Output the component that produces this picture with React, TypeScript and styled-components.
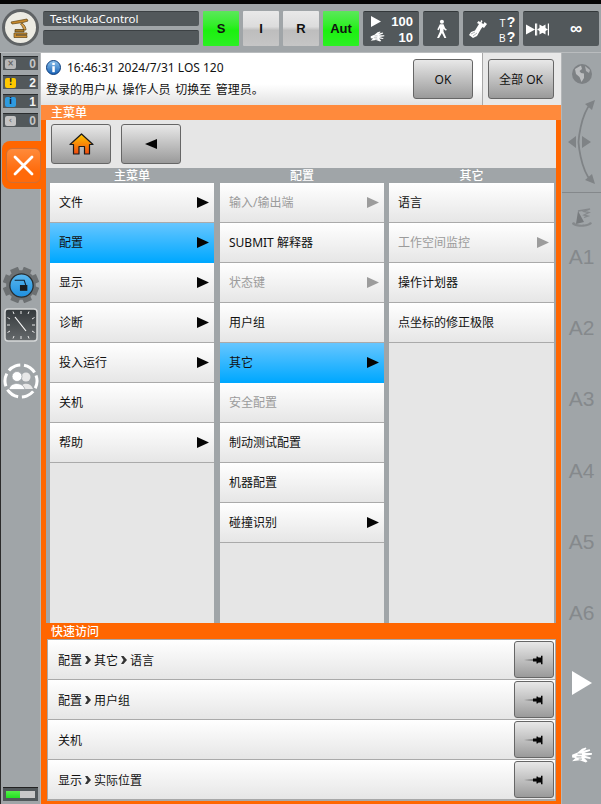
import React from "react";
import styled, { createGlobalStyle } from "styled-components";

const Global = createGlobalStyle`
  html, body { margin: 0; padding: 0; background: #a0a5a8; }
  * { box-sizing: border-box; }
  body { font-family: "Noto Sans", "Noto Sans CJK SC", sans-serif; font-size: 12px; color: #111; }
`;
const Page = styled.div`width: 601px; height: 804px; overflow: hidden; display: flex; flex-direction: column; background: #a0a5a8;`;
const BlackStrip = styled.div`height: 4px; background: #050505;`;
const TopBar = styled.div`height: 49px; display: flex; align-items: flex-start; padding: 7px 0 0 2px; background: #a0a5a8; border-bottom: 1px solid #b9bcbe;`;
const LogoDisc = styled.div`width: 37px; height: 37px; margin-top: -2px; border-radius: 50%; border: 3px solid #5f6365; background: #ecebe3; display: flex; align-items: center; justify-content: center;`;
const Names = styled.div`width: 156px; margin-left: 4px; display: flex; flex-direction: column; gap: 4px;`;
const NameField = styled.div`height: 15px; background: #52585b; border-radius: 2px; color: #fff; font-size: 11.500px; line-height: 14px; padding-left: 7px; border-top: 1px solid #3c4144;`;
const ModeRow = styled.div`display: flex; gap: 4px; margin-left: 4px;`;
const ModeKey = styled.div<{ $on?: boolean }>`
  width: 36px; height: 35px; display: flex; align-items: center; justify-content: center; font-weight: 700; font-size: 13px; font-family: "Liberation Sans", sans-serif; color: #111; border-radius: 1px;
  background: ${(p) => p.$on ? "linear-gradient(#5be85a 0%, #33ee2a 40%, #1cf010 55%, #2cf024 100%)" : "linear-gradient(#e9e9e9, #dcdcdc 45%, #bdbdbd 55%, #c6c6c6)"};
`;
const StatusTile = styled.div<{ $w: number }>`
  width: ${(p) => p.$w}px; height: 35px; background: #52585b; border-top: 1px solid #33383a; border-radius: 2px; color: #fff; font-weight: 700; display: flex; align-items: center; font-family: "Liberation Sans", sans-serif;
`;
const TileRows = styled(StatusTile)`flex-direction: column; align-items: stretch; justify-content: center; padding: 0 6px 0 7px; gap: 1px;`;
const TileRow = styled.div`display: flex; justify-content: space-between; align-items: center; height: 15px; font-size: 13px;`;
const TileCenter = styled(StatusTile)`justify-content: center;`;
const TileProbe = styled(StatusTile)`padding-left: 5px;`;
const TileWide = styled(StatusTile)`padding: 0 0 0 3px; gap: 21px; font-size: 17px;`;
const SmallT = styled.span`font-size: 10px; font-weight: 400;`;
const QMark = styled.span`font-size: 14px;`;
const Tq = styled.div`display: flex; align-items: baseline; gap: 1px; justify-content: flex-end; height: 15px;`;
const TqCol = styled.div`display: flex; flex-direction: column; margin-left: 11px;`;
const Body = styled.div`flex: 1; display: flex; min-height: 0;`;

const LeftRail = styled.div`width: 41px; border-left: 1px solid #2b2b2b; border-right: 1px solid #b4b7b9; display: flex; flex-direction: column; background: #a0a5a8;`;
const Counters = styled.div`display: flex; flex-direction: column; gap: 5px; padding: 3px 0 0 2px;`;
const Counter = styled.div<{ $dim?: boolean }>`width: 35px; height: 14px; background: #52585b; border-top: 1px solid #2a2d2f; display: flex; align-items: center; justify-content: space-between; padding: 0 2px 0 2px; color: ${(p) => (p.$dim ? "#c4c6c7" : "#f2f2f2")}; font-size: 12px; font-weight: 700; font-family: "Liberation Sans", sans-serif;`;
const Lamp = styled.div<{ $bg: string; $fg: string }>`width: 11px; height: 10px; border-radius: 2px; background: ${(p) => p.$bg}; color: ${(p) => p.$fg}; font-size: 8px; line-height: 10px; text-align: center; font-weight: 700; font-family: "DejaVu Sans", sans-serif;`;
const CloseTab = styled.div`width: 39px; height: 48px; margin: 14px -1px 0 1px; background: #ff6600; border-radius: 8px 0 0 8px; padding: 7px 1px 0 4px;`;
const CloseKey = styled.div`width: 35px; height: 35px; border-radius: 6px; background: linear-gradient(#ff8a3a, #ff6a0a 70%); border: 1px solid #cf6f35; display: flex; align-items: center; justify-content: center;`;
const RailIcon = styled.div<{ $top: number }>`margin-top: ${(p) => p.$top}px; display: flex; justify-content: center;`;
const Battery = styled.div`margin: auto 0 3px 2px; width: 35px; height: 14px; background: #52585b; border-top: 1px solid #222; padding: 3px; display: flex;`;
const BatteryFill = styled.div`width: 14px; background: linear-gradient(#55f04a, #22e020);`;
const BatteryRest = styled.div`flex: 1; background: #c8c8c8;`;

const Center = styled.div`width: 520px; display: flex; flex-direction: column; background: #ff6600;`;
const MessageBar = styled.div`height: 52px; display: flex; background: linear-gradient(#fff 60%, #e2e2e2);`;
const MessageMain = styled.div`flex: 1; display: flex; justify-content: space-between; padding: 6px 9px 0 5px;`;
const MessageText = styled.div`display: flex; flex-direction: column;`;
const MsgHead = styled.div`display: flex; align-items: center; gap: 6px; height: 16px; font-size: 12px;`;
const MsgBody = styled.div`margin-top: 6px; font-size: 12px; line-height: 17px; white-space: pre; word-spacing: 1.500px;`;
const MessageAll = styled.div`width: 79px; border-left: 1px solid #a8a8a8; background: #e8e8e8; padding: 6px 0 0 5px;`;
const GreyButton = styled.div<{ $w: number; $h?: number }>`
  width: ${(p) => p.$w}px; height: ${(p) => p.$h ?? 40}px; border: 1px solid #666; border-radius: 3px;
  background: linear-gradient(#e8e8e8, #9a9a9a); display: flex; align-items: center; justify-content: center; font-size: 12px; color: #111; flex: none;
`;
const PanelTitle = styled.div`height: 15px; background: #ff8a3c; color: #fff; font-weight: 500; font-size: 12px; line-height: 16px; padding-left: 10px;`;
const PanelInner = styled.div`flex: 1; display: flex; flex-direction: column; padding: 0 5px;`;
const ToolRow = styled.div`height: 48px; background: #e6e6e6; display: flex; gap: 10px; padding: 4px 5px;`;
const ColumnsArea = styled.div`height: 455px; background: #a0a5a8; display: flex; padding: 0 2px 0 4px;`;
const Column = styled.div<{ $w: number; $gap: number }>`width: ${(p) => p.$w}px; margin-right: ${(p) => p.$gap}px; display: flex; flex-direction: column;`;
const ColumnTitle = styled.div`height: 15px; text-align: center; color: #fff; font-weight: 500; font-size: 12px; line-height: 15px;`;
const ColumnBody = styled.div`flex: 1; background: #e6e6e6;`;
const MenuRow = styled.div<{ $active?: boolean; $off?: boolean }>`
  height: 40px; padding: 0 5px 1px 9px; display: flex; align-items: center; justify-content: space-between; font-size: 12px;
  color: ${(p) => (p.$off ? "#9b9b9b" : "#111")};
  background: ${(p) => (p.$active ? "linear-gradient(#66c6ff, #00a8ff)" : "linear-gradient(#fff, #e6e6e6)")};
  border-bottom: 1px solid ${(p) => (p.$active ? "#00a8ff" : "#aaa")};
`;
const QuickTitle = styled.div`height: 16px; margin-left: -5px; padding-left: 10px; color: #fff; font-weight: 500; font-size: 12px; line-height: 17px;`;
const QuickList = styled.div`margin-left: 1px; border: 1px solid #a8a8a8; border-bottom-width: 2px; width: 509px;`;
const QuickRow = styled.div`height: 40px; display: flex; align-items: center; justify-content: space-between; padding: 0 1px 0 10px; background: linear-gradient(#fff, #e6e6e6); border-bottom: 1px solid #aaa; font-size: 12px; &:last-child { border-bottom: 0; height: 39px; }`;
const Crumbs = styled.div`display: flex; align-items: center; gap: 3px;`;

const RightRail = styled.div`width: 40px; display: flex; flex-direction: column; align-items: center; background: #a0a5a8; border-left: 1px solid #b4b7b9;`;
const AxisGroup = styled.div`width: 100%; height: 140px; border-bottom: 1px solid #84888b; display: flex; flex-direction: column; align-items: center; padding-top: 11px; gap: 16px;`;
const AxisLabel = styled.div`font-size: 21px; height: 71.200px; line-height: 24px; color: #85898c; font-family: "Liberation Sans", sans-serif;`;
const AxisList = styled.div`display: flex; flex-direction: column; margin-top: 15px; align-items: center;`;
const Jog = styled.div<{ $top: number }>`margin-top: ${(p) => p.$top}px; display: flex; justify-content: center;`;

const Tri = ({ off }: { off?: boolean }) => (
  <svg width="12" height="11" viewBox="0 0 12 11"><path d="M0 0L12 5.500L0 11Z" fill={off ? "#9c9c9c" : "#050505"} /></svg>
);
const Chev = () => (
  <svg width="6" height="8" viewBox="0 0 6 8"><path d="M0 0h2.500L6 4L2.500 8H0L2.500 4Z" fill="#333" /></svg>
);
const Hand = ({ w = 18 }: { w?: number }) => (
  <svg width={w} height={w * 0.8} viewBox="0 0 20 16" fill="#fff">
    <path d="M1 7L6 5L10 1.500L13.500 0.500L14 1.800L11 3.500L17 2L17.500 3.300L12 5.500L19 5.500L19 7L12.500 8L18 9.500L17.500 10.800L12 10L15 13L13.500 14L8 12L1 13L4 10L1 9.500Z" />
    <path d="M6 6.500L10 6.500M5 9L9.500 9M7 11L10 11" stroke="#9aa0a3" strokeWidth="0.800" />
  </svg>
);
const Pin = () => (
  <svg width="20" height="10" viewBox="0 0 20 10">
    <path d="M0 5L10 4.400V5.600Z" fill="#333" />
    <path d="M9 3.500H12.500V1.500H13.500L14.500 2.500H17V0.800H18.500V9.200H17V7.500H14.500L13.500 8.500H12.500V6.500H9Z" fill="#050505" />
  </svg>
);
const Logo = () => (
  <svg width="25" height="25" viewBox="0 0 25 25">
    <path d="M3 7L19 4L20 6L15 7.500L4 9Z" fill="#c98a2b" stroke="#5c4212" strokeWidth="0.700" />
    <path d="M14 8C17 10 18 13 18 15H15.500C15.500 13 14 11 12.500 9Z" fill="#d9a048" stroke="#5c4212" strokeWidth="0.700" />
    <path d="M7 14.500H16V17H7Z" fill="#a87a2c" stroke="#4a3810" strokeWidth="0.700" />
    <path d="M6 18H19V19.500H8V20.500H19V22.500H6Z" fill="#d09234" stroke="#5c4212" strokeWidth="0.700" />
  </svg>
);
const Walker = () => (
  <svg width="13" height="20" viewBox="0 0 16 24" fill="#fff">
    <circle cx="8.500" cy="3" r="2.500" />
    <path d="M6 6H10.500L12.500 11L14.500 12.500L13.500 14L10.500 12L10.500 15L14 23H11.500L8.500 17L5 23H2.500L6 15.500L6.200 10.500L4.500 13.500L2.800 12.500Z" />
  </svg>
);
const Probe = () => (
  <svg width="20" height="19" viewBox="0 0 20 19" fill="#fff">
    <path d="M13 0L14.500 1L13.500 3L15.500 4L16.500 2L19 4L16 8L14.500 7L13 9L9 16L5 18L1 15L3 12L7 10.500L11 4L9 3L10.500 1L12.500 2.200Z" />
    <path d="M3 14L7 12M5 16L9 13" stroke="#9aa0a3" strokeWidth="0.800" />
  </svg>
);
const SkipIcon = () => (
  <svg width="23" height="13" viewBox="0 0 23 13" fill="#fff">
    <path d="M0 1.500L9 6.500L0 11.500Z" /><rect x="9" y="0.500" width="1.200" height="12" />
    <path d="M11 6.500L19.500 1.500V11.500Z" /><rect x="10.200" y="0.500" width="1" height="12" />
    <path d="M13.500 1.500L22 6.500L13.500 11.500Z" /><rect x="21.800" y="0.500" width="1.200" height="12" />
  </svg>
);
const InfoDot = () => (
  <svg width="15" height="15" viewBox="0 0 15 15">
    <defs><linearGradient id="ig" x1="0" y1="0" x2="0" y2="1"><stop offset="0" stopColor="#8fc4ee" /><stop offset="1" stopColor="#1560b5" /></linearGradient></defs>
    <circle cx="7.500" cy="7.500" r="7" fill="url(#ig)" stroke="#0e3e7d" />
    <rect x="6.300" y="6.200" width="2.500" height="6" fill="#fff" /><rect x="6.300" y="2.800" width="2.500" height="2.300" fill="#fff" />
  </svg>
);
const HomeIcon = () => (
  <svg width="25" height="22" viewBox="0 0 25 22">
    <defs><linearGradient id="hg" x1="0" y1="0" x2="0" y2="1"><stop offset="0" stopColor="#ffc800" /><stop offset="1" stopColor="#f04a10" /></linearGradient></defs>
    <path d="M12.500 1L24 11.500H20.500V21H15.500V13.500H10V21H4.500V11.500H1Z" fill="url(#hg)" stroke="#1a1a1a" strokeWidth="1.200" strokeLinejoin="round" />
  </svg>
);
const XIcon = () => (
  <svg width="21" height="21" viewBox="0 0 21 21"><path d="M2 2L19 19M19 2L2 19" stroke="#fff" strokeWidth="2.800" strokeLinecap="round" /></svg>
);
const Gear = () => (
  <svg width="36" height="36" viewBox="0 0 34 34">
    <defs>
      <linearGradient id="gg" x1="0" y1="0" x2="0" y2="1"><stop offset="0" stopColor="#5cb8ee" /><stop offset="1" stopColor="#1d8fe0" /></linearGradient>
    </defs>
    <g fill="#6c7072">
      {[22, 67, 112, 157, 202, 247, 292, 337].map((a) => (
        <rect key={a} x="13" y="0" width="8" height="8" transform={`rotate(${a} 17 17)`} />
      ))}
      <circle cx="17" cy="17" r="14" />
    </g>
    <circle cx="17.500" cy="17.500" r="11" fill="url(#gg)" stroke="#2a2e30" strokeWidth="1.200" />
    <path d="M11 12.500H20L21.500 17" fill="none" stroke="#123" strokeWidth="1" />
    <path d="M16 17H23V22.500H16Z" fill="#1a1f22" />
  </svg>
);
const Clock = () => (
  <svg width="34" height="34" viewBox="0 0 34 34">
    <defs><linearGradient id="cg" x1="0" y1="0" x2="0" y2="1"><stop offset="0" stopColor="#33383b" /><stop offset="1" stopColor="#666a6c" /></linearGradient></defs>
    <rect x="1" y="1" width="32" height="32" rx="3" fill="url(#cg)" stroke="#d5d7d8" strokeWidth="1.500" />
    <g stroke="#e8e8e8" strokeWidth="1">
      <path d="M17 3V6M17 28V31M3 17H6M28 17H31M9 3.500L10 6M25 3.500L24 6M9 30.500L10 28M25 30.500L24 28M3.500 9.500L6 11M30.500 9.500L28 11M3.500 24.500L6 23M30.500 24.500L28 23" />
    </g>
    <path d="M11 9L22 23" stroke="#fff" strokeWidth="1.200" />
  </svg>
);
const Users = () => (
  <svg width="36" height="36" viewBox="0 0 36 36" fill="#fff">
    <circle cx="18" cy="18" r="16" fill="none" stroke="#fff" strokeWidth="3" strokeDasharray="13 3.700" transform="rotate(-20 18 18)" />
    <circle cx="23" cy="14" r="4.500" fill="#e8e8e8" /><path d="M17 26C18 19 28 19 30 26Z" fill="#e8e8e8" />
    <circle cx="14" cy="13.500" r="5" stroke="#a0a5a8" strokeWidth="0.800" /><path d="M6 26.500C7 18.500 20 18.500 22 26.500Z" stroke="#a0a5a8" strokeWidth="0.800" />
  </svg>
);
const Globe = () => (
  <svg width="20" height="20" viewBox="0 0 20 20">
    <circle cx="10" cy="10" r="10" fill="#7d8184" />
    <path d="M3 5L9 1.500L10 5L7.500 7L9 9L12 9.500L12 14L9.500 18L7.500 13L4 10Z" fill="#d0d2d3" opacity=".75" />
    <path d="M13 2L18 6L17 9L14 7Z" fill="#d0d2d3" opacity=".6" />
  </svg>
);
const Swing = () => (
  <svg width="28" height="84" viewBox="0 0 28 84" fill="#7f8386">
    <path d="M23 3C12 16 10.500 42 10.500 42C10.500 42 12 68 23 81" fill="none" stroke="#7f8386" strokeWidth="1.800" />
    <path d="M27 0L24 10L17 4Z M27 84L24 74L17 80Z M0 42L8 36V48Z M14 36L23 42L14 48Z" />
  </svg>
);
const Tool = () => (
  <svg width="22" height="22" viewBox="0 0 22 22">
    <path d="M7 3L19 1L13 3.500L18 4.500L13 7L17 8L13 9.500" fill="none" stroke="#85898c" strokeWidth="1.300" />
    <path d="M7 3L13 14L5 16Z" fill="#777b7e" />
    <path d="M1 15C1 20 19 20 21 15L19 14C18 17 5 18 3 14Z" fill="#85898c" />
  </svg>
);

type Item = { t: string; a?: number; on?: number; off?: number };
const menu: Item[] = [
  { t: "文件", a: 1 }, { t: "配置", a: 1, on: 1 }, { t: "显示", a: 1 }, { t: "诊断", a: 1 }, { t: "投入运行", a: 1 }, { t: "关机" }, { t: "帮助", a: 1 },
];
const conf: Item[] = [
  { t: "输入/输出端", a: 1, off: 1 }, { t: "SUBMIT 解释器" }, { t: "状态键", a: 1, off: 1 }, { t: "用户组" }, { t: "其它", a: 1, on: 1 }, { t: "安全配置", off: 1 }, { t: "制动测试配置" }, { t: "机器配置" }, { t: "碰撞识别", a: 1 },
];
const other: Item[] = [
  { t: "语言" }, { t: "工作空间监控", a: 1, off: 1 }, { t: "操作计划器" }, { t: "点坐标的修正极限" },
];
const quick = [["配置", "其它", "语言"], ["配置", "用户组"], ["关机"], ["显示", "实际位置"]];
const cols = [
  { h: "主菜单", items: menu, w: 164, g: 6 }, { h: "配置", items: conf, w: 164, g: 5 }, { h: "其它", items: other, w: 165, g: 0 },
];
const counters = [
  { c: "0", bg: "#b8b8b8", fg: "#666", g: "×", dim: true }, { c: "2", bg: "#ffc800", fg: "#222", g: "!" }, { c: "1", bg: "#2f9be0", fg: "#123", g: "i" }, { c: "0", bg: "#c4c4c4", fg: "#777", g: "‹", dim: true },
];

export default function App() {
  return (
    <Page>
      <Global />
      <BlackStrip />
      <TopBar>
        <LogoDisc><Logo /></LogoDisc>
        <Names>
          <NameField>TestKukaControl</NameField>
          <NameField />
        </Names>
        <ModeRow>
          <ModeKey $on>S</ModeKey>
          <ModeKey>I</ModeKey>
          <ModeKey>R</ModeKey>
          <ModeKey $on>Aut</ModeKey>
          <TileRows $w={56}>
            <TileRow><svg width="12" height="13" viewBox="0 0 12 13"><path d="M1 1L11 6.500L1 12Z" fill="#fff" /></svg><span>100</span></TileRow>
            <TileRow><Hand w={15} /><span>10</span></TileRow>
          </TileRows>
          <TileCenter $w={36}><Walker /></TileCenter>
          <TileProbe $w={56}>
            <Probe />
            <TqCol>
              <Tq><SmallT>T</SmallT><QMark>?</QMark></Tq>
              <Tq><SmallT>B</SmallT><QMark>?</QMark></Tq>
            </TqCol>
          </TileProbe>
          <TileWide $w={76}><SkipIcon /><span>∞</span></TileWide>
        </ModeRow>
      </TopBar>
      <Body>
        <LeftRail>
          <Counters>
            {counters.map((c, i) => (
              <Counter key={i} $dim={c.dim}><Lamp $bg={c.bg} $fg={c.fg}>{c.g}</Lamp>{c.c}</Counter>
            ))}
          </Counters>
          <CloseTab><CloseKey><XIcon /></CloseKey></CloseTab>
          <RailIcon $top={78}><Gear /></RailIcon>
          <RailIcon $top={5}><Clock /></RailIcon>
          <RailIcon $top={21}><Users /></RailIcon>
          <Battery><BatteryFill /><BatteryRest /></Battery>
        </LeftRail>
        <Center>
          <MessageBar>
            <MessageMain>
              <MessageText>
                <MsgHead><InfoDot /><span>16:46:31 2024/7/31 LOS 120</span></MsgHead>
                <MsgBody>登录的用户从 操作人员 切换至 管理员。</MsgBody>
              </MessageText>
              <GreyButton $w={60}>OK</GreyButton>
            </MessageMain>
            <MessageAll><GreyButton $w={66}>全部 OK</GreyButton></MessageAll>
          </MessageBar>
          <PanelTitle>主菜单</PanelTitle>
          <PanelInner>
            <ToolRow>
              <GreyButton $w={60}><HomeIcon /></GreyButton>
              <GreyButton $w={60}>
                <svg width="12" height="10" viewBox="0 0 12 10"><path d="M12 0L0 5L12 10Z" fill="#050505" /></svg>
              </GreyButton>
            </ToolRow>
            <ColumnsArea>
              {cols.map((col) => (
                <Column key={col.h} $w={col.w} $gap={col.g}>
                  <ColumnTitle>{col.h}</ColumnTitle>
                  <ColumnBody>
                    {col.items.map((it) => (
                      <MenuRow key={it.t} $active={!!it.on} $off={!!it.off}>
                        <span>{it.t}</span>
                        {it.a ? <Tri off={!!it.off} /> : null}
                      </MenuRow>
                    ))}
                  </ColumnBody>
                </Column>
              ))}
            </ColumnsArea>
            <QuickTitle>快速访问</QuickTitle>
            <QuickList>
              {quick.map((q, i) => (
                <QuickRow key={i}>
                  <Crumbs>
                    {q.map((p, j) => (
                      <React.Fragment key={p}>
                        {j > 0 ? <Chev /> : null}
                        <span>{p}</span>
                      </React.Fragment>
                    ))}
                  </Crumbs>
                  <GreyButton $w={40} $h={37}><Pin /></GreyButton>
                </QuickRow>
              ))}
            </QuickList>
          </PanelInner>
        </Center>
        <RightRail>
          <AxisGroup>
            <Globe />
            <Swing />
          </AxisGroup>
          <Jog $top={15}><Tool /></Jog>
          <AxisList>
            {["A1", "A2", "A3", "A4", "A5", "A6"].map((a) => <AxisLabel key={a}>{a}</AxisLabel>)}
          </AxisList>
          <Jog $top={-1}>
            <svg width="20" height="24" viewBox="0 0 20 24"><path d="M0 0L20 12L0 24Z" fill="#fff" /></svg>
          </Jog>
          <Jog $top={52}><Hand w={22} /></Jog>
        </RightRail>
      </Body>
    </Page>
  );
}
